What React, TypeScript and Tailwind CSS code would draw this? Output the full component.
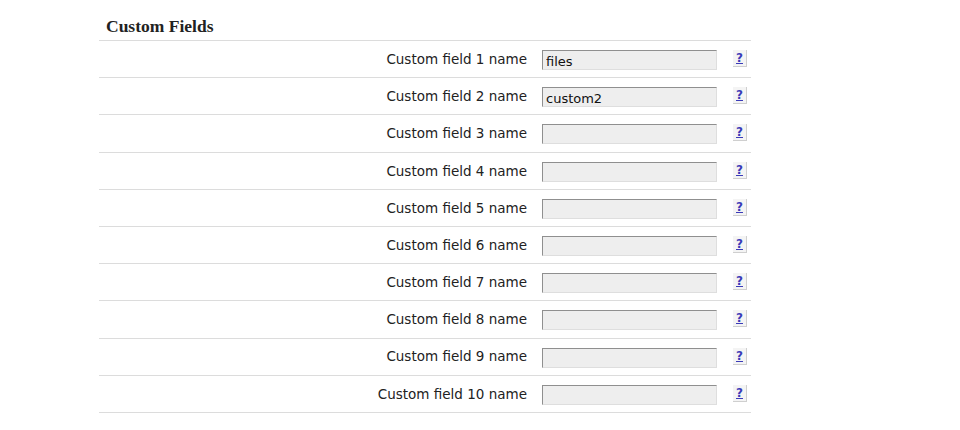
import React from 'react';

const fields = [
  'files',
  'custom2',
  '',
  '',
  '',
  '',
  '',
  '',
  '',
  '',
];

const HelpIcon: React.FC = () => (
  <span className="inline-flex h-[17px] w-[14px] items-center justify-center border-b border-r border-[#cfcfcf] bg-[#f4f4f4] text-[12px] font-bold leading-none text-[#3b3bb8] underline [font-family:'DejaVu_Sans',Verdana,sans-serif]">
    ?
  </span>
);

const App: React.FC = () => {
  return (
    <div className="min-h-[430px] w-[960px] bg-white">
      <div className="ml-[99px] w-[652px] pt-[16px]">
        <h2 className="pb-[4px] pl-[7px] text-[17.5px] font-bold leading-[20px] text-[#222] [font-family:'Liberation_Serif',Georgia,serif]">
          Custom Fields
        </h2>
        <div className="border-t border-[#dcdcdc]">
          {fields.map((value, i) => (
            <div
              key={i}
              className="flex h-[37.2px] items-center border-b border-[#dcdcdc]"
            >
              <label className="w-[428px] text-right text-[13.5px] text-[#222] [font-family:'DejaVu_Sans',Verdana,sans-serif]">
                Custom field {i + 1} name
              </label>
              <input
                readOnly
                value={value}
                className="ml-[15px] mt-[2px] h-[20px] w-[175px] border-l border-t border-b border-r border-l-[#8f8f8f] border-t-[#8f8f8f] border-r-[#dedede] border-b-[#dedede] bg-[#eeeeee] px-[3px] pt-[2px] text-[13px] text-[#111] outline-none [font-family:'DejaVu_Sans',Verdana,sans-serif]"
              />
              <div className="-mt-[1px] ml-[16px] flex">
                <HelpIcon />
              </div>
            </div>
          ))}
        </div>
      </div>
    </div>
  );
};

export default App;
